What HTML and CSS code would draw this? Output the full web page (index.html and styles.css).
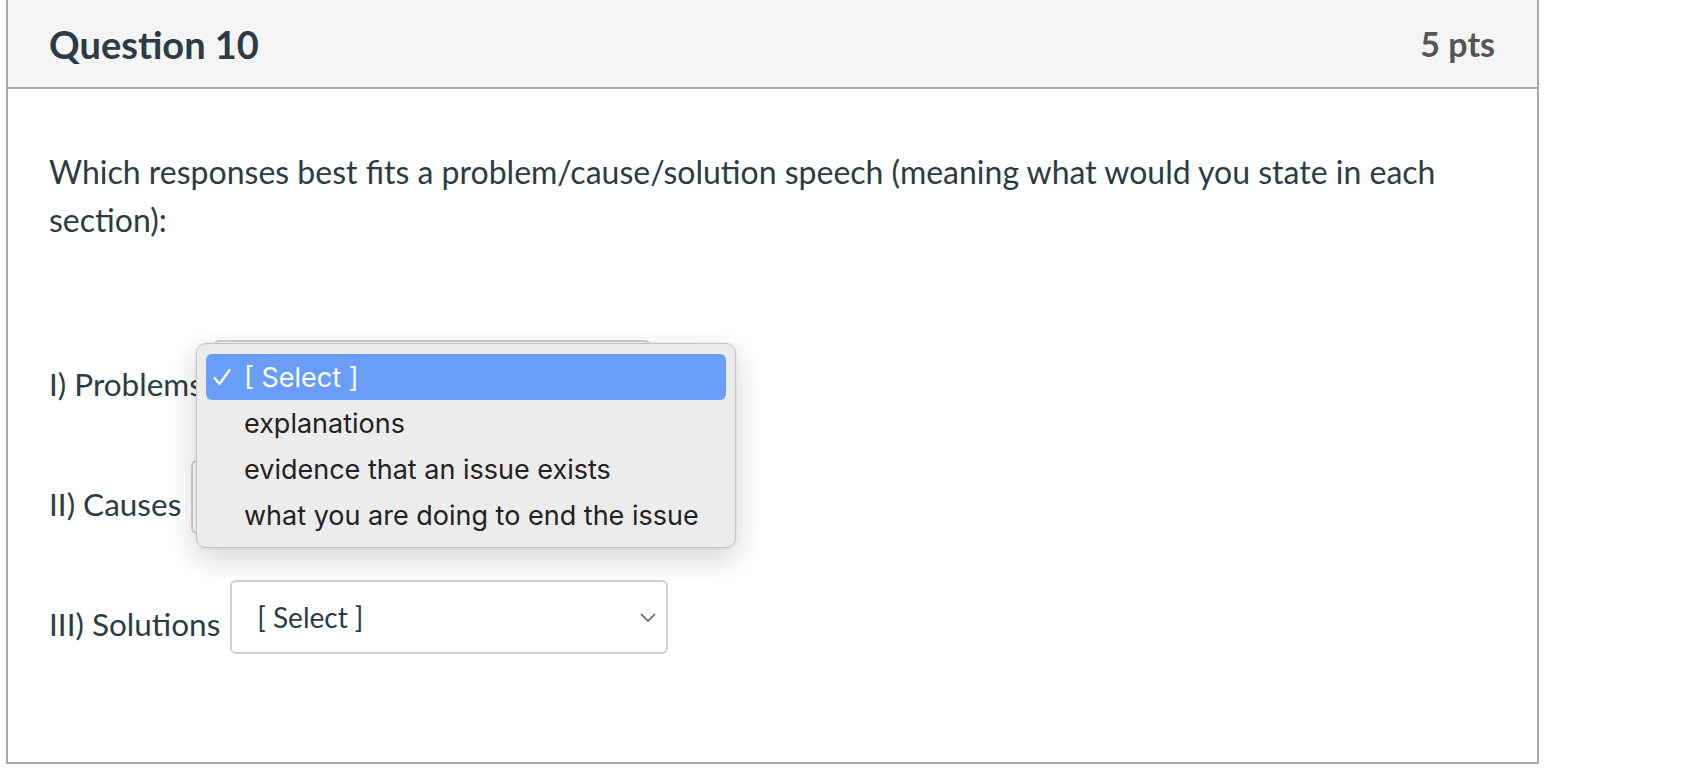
FILE: index.html
```html
<!DOCTYPE html>
<html lang="en">
<head>
  <meta charset="UTF-8">
  <meta name="viewport" content="width=device-width, initial-scale=1.0">
  <title>Question 10</title>
  <link rel="stylesheet" href="styles.css">
</head>
<body>

  <div class="question">
    <!-- Header -->
    <div class="question-header">
      <h2 class="question-name">Question 10</h2>
      <div class="question-points">5 pts</div>
    </div>

    <!-- Body -->
    <div class="question-body">
      <p class="question-text">Which responses best fits a problem/cause/solution speech (meaning what would you state in each section):</p>

      <div class="answer-row">
        <span class="answer-label">I) Problems</span>
        <div class="select-box">
          <span>[ Select ]</span>
          <svg class="chevron" width="16" height="9" viewBox="0 0 16 9"><polyline points="1,1 8,8 15,1" fill="none" stroke="#555" stroke-width="1.5"/></svg>
        </div>

        <!-- open dropdown menu -->
        <ul class="select-menu">
          <li class="option selected">
            <svg class="check" width="20" height="20" viewBox="0 0 20 20"><path d="M2.5 11 L7.5 17 L17.5 3" fill="none" stroke="#fff" stroke-width="2.2" stroke-linecap="round" stroke-linejoin="round"/></svg>
            [ Select ]
          </li>
          <li class="option">explanations</li>
          <li class="option">evidence that an issue exists</li>
          <li class="option">what you are doing to end the issue</li>
        </ul>
      </div>

      <div class="answer-row">
        <span class="answer-label">II) Causes</span>
        <div class="select-box">
          <span>[ Select ]</span>
          <svg class="chevron" width="16" height="9" viewBox="0 0 16 9"><polyline points="1,1 8,8 15,1" fill="none" stroke="#555" stroke-width="1.5"/></svg>
        </div>
      </div>

      <div class="answer-row">
        <span class="answer-label">III) Solutions</span>
        <div class="select-box">
          <span>[ Select ]</span>
          <svg class="chevron" width="16" height="9" viewBox="0 0 16 9"><polyline points="1,1 8,8 15,1" fill="none" stroke="#555" stroke-width="1.5"/></svg>
        </div>
      </div>
    </div>
  </div>

</body>
</html>
```

FILE: styles.css
```css
/* General Styles */
body {
  margin: 0;
  background-color: #fff;
  font-family: Lato, "Open Sans", sans-serif;
  color: #2d3b45;
}

.question {
  box-sizing: border-box;
  width: 1533px;
  margin-left: 6px;
  border: 2px solid #a9a9a9;
  border-top: none;
}

/* Header */
.question-header {
  height: 87px;
  display: flex;
  justify-content: space-between;
  align-items: center;
  padding: 0 42px 0 41px;
  background-color: #f5f5f5;
  border-bottom: 2px solid #a9a9a9;
}

.question-name {
  margin: 0;
  font-size: 38px;
  font-weight: bold;
}

.question-points {
  font-size: 34px;
  font-weight: bold;
  color: #555;
}

/* Body */
.question-body {
  padding: 59px 42px 108px 41px;
}

.question-text {
  margin: 0 0 96px;
  font-size: 32px;
  line-height: 48px;
}

.answer-row {
  position: relative;
  display: flex;
  align-items: center;
  gap: 10px;
  margin-bottom: 46px;
}

.answer-row:last-child {
  margin-bottom: 0;
}

.answer-label {
  padding-top: 13px;
  font-size: 31.5px;
}

.select-box {
  box-sizing: border-box;
  width: 438px;
  height: 74px;
  display: flex;
  align-items: center;
  justify-content: space-between;
  padding: 0 10px 0 25px;
  border: 2px solid #cfd2d5;
  border-radius: 6px;
  background-color: #fff;
  font-size: 28px;
}

.chevron {
  display: block;
}

/* Native-looking dropdown popup */
.select-menu {
  position: absolute;
  z-index: 10;
  left: 147px;
  top: 3px;
  box-sizing: border-box;
  width: 540px;
  margin: 0;
  padding: 10px 9px 9px;
  list-style: none;
  background-color: #ececec;
  border: 1px solid #c4c4c4;
  border-radius: 10px;
  box-shadow: 0 10px 30px rgba(0, 0, 0, 0.18), 0 0 3px rgba(0, 0, 0, 0.08);
  font-family: Inter, "Noto Sans", sans-serif;
  font-size: 27px;
  color: #222;
}

.option {
  position: relative;
  height: 46px;
  line-height: 47px;
  padding-left: 38px;
  border-radius: 6px;
}

.option.selected {
  background-color: #6a9df7;
  color: #fff;
}

.check {
  position: absolute;
  left: 6px;
  top: 13px;
}
```
